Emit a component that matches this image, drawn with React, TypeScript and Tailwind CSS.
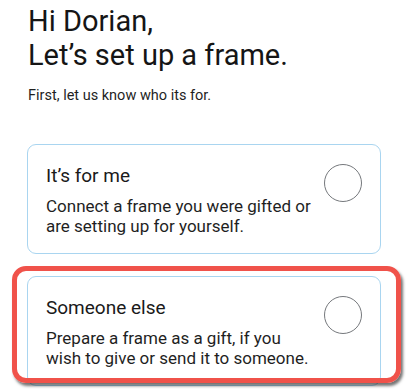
import React from "react";

function Card({ title, body }: { title: string; body: React.ReactNode }) {
  return (
    <div className="mx-[27px] flex items-start justify-between rounded-[9px] border-[1.5px] border-[#a9d5f0] bg-white pl-[18px] pr-[18px] pt-[19px] pb-[17px]">
      <div className="flex flex-col">
        <div className="text-[19px] leading-[24px] text-[#1a1a1a]">{title}</div>
        <div className="mt-[8px] text-[17px] leading-[20px] text-[#1f1f1f]">{body}</div>
      </div>
      <div className="h-[38px] w-[38px] shrink-0 rounded-full border-[1.5px] border-[#75787c]" />
    </div>
  );
}

export default function App() {
  return (
    <div
      className="relative h-[389px] w-[408px] overflow-hidden bg-white"
      style={{ fontFamily: "Roboto, 'Noto Sans', sans-serif" }}
    >
      <div className="pl-[28px] pt-[4px]">
        <h1 className="text-[29px] font-normal leading-[34px] text-[#151515]">
          Hi Dorian,
          <br />
          Let’s set up a frame.
        </h1>
        <p className="mt-[14px] text-[14.5px] leading-[20px] text-[#1f1f1f]">
          First, let us know who its for.
        </p>
      </div>
      <div className="mt-[38px] flex flex-col gap-[22px]">
        <Card
          title="It’s for me"
          body={
            <>
              Connect a frame you were gifted or
              <br />
              are setting up for yourself.
            </>
          }
        />
        <Card
          title="Someone else"
          body={
            <>
              Prepare a frame as a gift, if you
              <br />
              wish to give or send it to someone.
            </>
          }
        />
      </div>
      <div className="pointer-events-none absolute left-[12px] top-[266px] h-[117px] w-[389px] rounded-[14px] border-[5px] border-[#f0524a] shadow-[2px_3px_3px_rgba(0,0,0,0.55)]" />
    </div>
  );
}
